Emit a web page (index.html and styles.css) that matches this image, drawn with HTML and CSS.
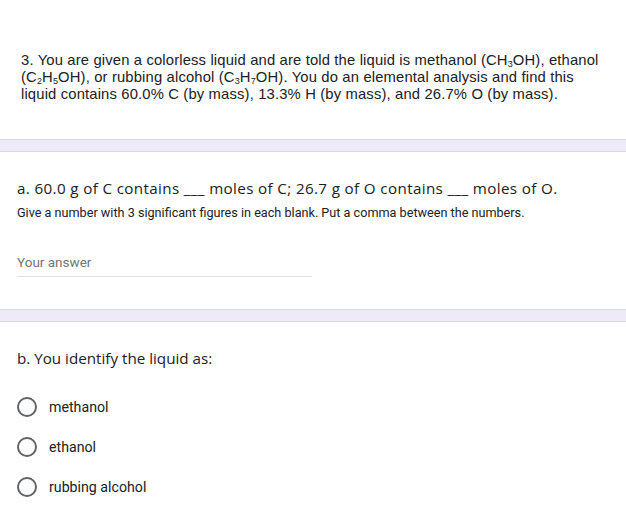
FILE: index.html
```html
<!DOCTYPE html>
<html>
<head>
<meta charset="utf-8">
<link rel="stylesheet" href="styles.css">
</head>
<body>
<div class="section intro">
  <p class="intro-text">3. You are given a colorless liquid and are told the liquid is methanol (CH<sub>3</sub>OH), ethanol (C<sub>2</sub>H<sub>5</sub>OH), or rubbing alcohol (C<sub>3</sub>H<sub>7</sub>OH). You do an elemental analysis and find this liquid contains 60.0% C (by mass), 13.3% H (by mass), and 26.7% O (by mass).</p>
</div>
<div class="band"></div>
<div class="section qa">
  <div class="q-title q-title-a">a. 60.0 g of C contains ___ moles of C; 26.7 g of O contains ___ moles of O.</div>
  <div class="q-help">Give a number with 3 significant figures in each blank. Put a comma between the numbers.</div>
  <div class="answer">Your answer</div>
</div>
<div class="band"></div>
<div class="section qb">
  <div class="q-title">b. You identify the liquid as:</div>
  <div class="options">
    <div class="option"><span class="radio"></span><span class="label">methanol</span></div>
    <div class="option"><span class="radio"></span><span class="label">ethanol</span></div>
    <div class="option"><span class="radio"></span><span class="label">rubbing alcohol</span></div>
  </div>
</div>
</body>
</html>
```
FILE: styles.css
```css
html, body {
  margin: 0;
  padding: 0;
  background: #ffffff;
}
body {
  width: 626px;
  height: 522px;
  overflow: hidden;
}
.section {
  display: flex;
  flex-direction: column;
}
.intro {
  height: 139px;
  box-sizing: border-box;
  padding: 52px 21px 0 21px;
}
.intro-text {
  margin: 0;
  font-family: "Liberation Sans", Arial, sans-serif;
  font-size: 14.8px;
  line-height: 17px;
  letter-spacing: 0.15px;
  color: #202124;
}
.intro-text sub {
  font-size: 9px;
  line-height: 0;
  vertical-align: -2px;
}
.band {
  height: 11px;
  background: #eeeaf8;
  border-top: 1px solid #d9d9de;
  border-bottom: 1px solid #d9d9de;
}
.qa {
  height: 157px;
  box-sizing: border-box;
  padding: 26px 17px 0 17px;
}
.q-title {
  font-family: "Open Sans", sans-serif;
  font-size: 15.2px;
  line-height: 21px;
  color: #202124;
  white-space: nowrap;
}
.q-title-a {
  letter-spacing: 0.36px;
}
.q-help {
  margin-top: 6px;
  font-family: Roboto, sans-serif;
  font-size: 12.65px;
  line-height: 16px;
  color: #202124;
  white-space: nowrap;
}
.answer {
  margin-top: 32px;
  width: 295px;
  padding-bottom: 5px;
  border-bottom: 1px solid #e0e0e0;
  font-family: Roboto, sans-serif;
  font-size: 13.5px;
  line-height: 18px;
  color: #70757a;
}
.qb {
  padding: 26px 17px 0 17px;
}
.options {
  margin-top: 18px;
  display: flex;
  flex-direction: column;
}
.option {
  height: 40px;
  display: flex;
  align-items: center;
  gap: 12px;
}
.radio {
  width: 20px;
  height: 20px;
  box-sizing: border-box;
  border: 2px solid #5f6368;
  border-radius: 50%;
}
.label {
  font-family: Roboto, sans-serif;
  font-size: 14.2px;
  color: #202124;
}
```
